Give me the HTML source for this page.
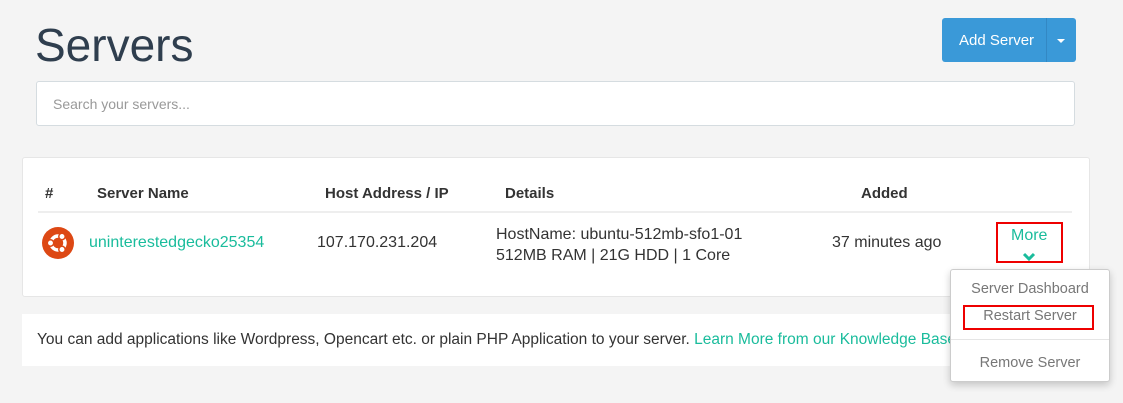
<!DOCTYPE html>
<html><head><style>
body{margin:0;background:#f4f4f4;font-family:"Liberation Sans",sans-serif;width:1123px;height:403px;overflow:hidden;position:relative;color:#333}
.a{position:absolute}
</style></head><body>
<div class="a" style="left:35px;top:18px;font-size:46px;color:#2f3e4e;line-height:54px">Servers</div>
<div class="a" style="left:942px;top:18px;width:134px;height:44px;background:#3a99d8;border-radius:3px;color:#fff;font-size:15px">
<span class="a" style="left:17px;top:14px">Add Server</span>
<span class="a" style="left:104px;top:0;width:1px;height:44px;background:#3388c4"></span>
<span class="a" style="left:115px;top:21px;border:4px solid transparent;border-top:4px solid #fff;width:0;height:0"></span></div>
<div class="a" style="left:36px;top:81px;width:1037px;height:43px;background:#fff;border:1px solid #d5dce0;border-radius:3px"><span class="a" style="left:16px;top:14px;font-size:14px;color:#999">Search your servers...</span></div>
<div class="a" style="left:22px;top:157px;width:1066px;height:138px;background:#fff;border:1px solid #e6e6e6;border-radius:3px"></div>
<div class="a" style="top:185px;font-size:15px;font-weight:bold;color:#333;left:0;width:1123px">
<span class="a" style="left:45px">#</span><span class="a" style="left:97px">Server Name</span><span class="a" style="left:325px">Host Address / IP</span><span class="a" style="left:505px">Details</span><span class="a" style="left:861px">Added</span></div>
<div class="a" style="left:38px;top:211px;width:1034px;height:2px;background:#eee"></div>
<svg class="a" style="left:42px;top:227px" width="32" height="32" viewBox="0 0 32 32"><circle cx="16" cy="16" r="16" fill="#dd4814"/><circle cx="16" cy="16" r="7" fill="none" stroke="#fff" stroke-width="3.5"/><circle cx="8.5" cy="16" r="3.2" fill="#fff" stroke="#dd4814" stroke-width="1.5"/><circle cx="20" cy="9.5" r="3.2" fill="#fff" stroke="#dd4814" stroke-width="1.5"/><circle cx="20" cy="22.5" r="3.2" fill="#fff" stroke="#dd4814" stroke-width="1.5"/></svg>
<div class="a" style="left:89px;top:234px;font-size:16px;color:#1abc9c">uninterestedgecko25354</div>
<div class="a" style="left:317px;top:234px;font-size:16px">107.170.231.204</div>
<div class="a" style="left:496px;top:224px;font-size:16px;line-height:21px">HostName: ubuntu-512mb-sfo1-01<br>512MB RAM | 21G HDD | 1 Core</div>
<div class="a" style="left:832px;top:234px;font-size:16px">37 minutes ago</div>
<div class="a" style="left:996px;top:222px;width:67px;height:41px;border:2px solid #e00;box-sizing:border-box"></div>
<div class="a" style="left:1011px;top:227px;font-size:16px;color:#1abc9c">More</div>
<svg class="a" style="left:1022px;top:252px" width="14" height="9"><path d="M2 2 L7 7 L12 2" stroke="#1abc9c" stroke-width="3" fill="none"/></svg>
<div class="a" style="left:22px;top:314px;width:1066px;height:52px;background:#fff"></div>
<div class="a" style="left:37px;top:331px;font-size:15.5px;white-space:nowrap">You can add applications like Wordpress, Opencart etc. or plain PHP Application to your server. <span style="color:#1abc9c">Learn More from our Knowledge Base</span></div>
<div class="a" style="left:950px;top:269px;width:158px;height:111px;background:#fff;border:1px solid #ccc;border-radius:3px;box-shadow:0 3px 8px rgba(0,0,0,.2)">
<div class="a" style="left:0;width:158px;top:11px;text-align:center;font-size:14.5px;color:#777">Server Dashboard</div>
<div class="a" style="left:12px;width:131px;height:25px;top:35px;border:2px solid #e00;box-sizing:border-box"></div>
<div class="a" style="left:0;width:158px;top:38px;text-align:center;font-size:14.5px;color:#777">Restart Server</div>
<div class="a" style="left:0;width:158px;top:69px;height:1px;background:#e5e5e5"></div>
<div class="a" style="left:0;width:158px;top:85px;text-align:center;font-size:14.5px;color:#777">Remove Server</div></div>
</body></html>
